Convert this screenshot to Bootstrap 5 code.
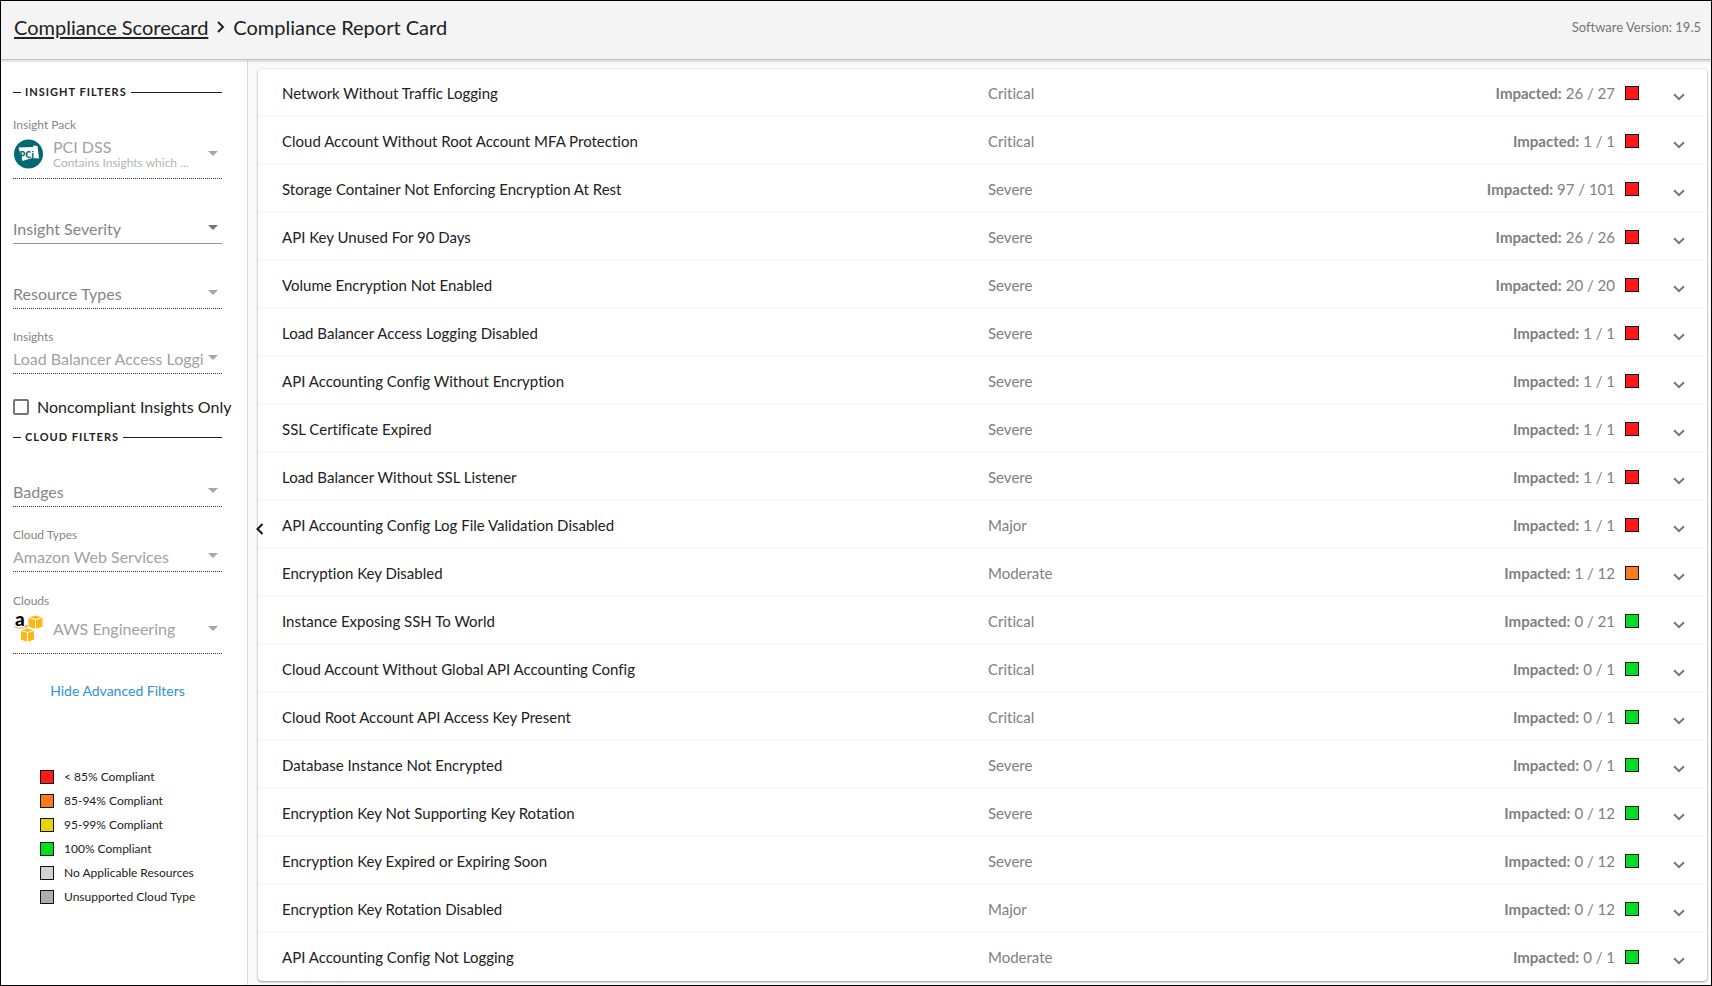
<!DOCTYPE html>
<html lang="en">
<head>
<meta charset="utf-8">
<meta name="viewport" content="width=device-width, initial-scale=1">
<title>Compliance Report Card</title>
<link href="https://cdn.jsdelivr.net/npm/bootstrap@5.3.0/dist/css/bootstrap.min.css" rel="stylesheet">
<style>
  body { font-family: Lato, "Liberation Sans", sans-serif; font-size: 16px; line-height: 24px; color: #212121; background: #fafafa; border: 1px solid #000; }
  body, button, select { font-variant-ligatures: none; }
  .topbar { height: 59px; padding: 0 10px 6px 13px; background: #f4f4f4; border-bottom: 1px solid #c4c4c4; box-shadow: 0 1px 3px rgba(0,0,0,.2); z-index: 2; }
  .crumbs { font-size: 20px; line-height: 28px; gap: 8px; }
  .crumbs a { color: inherit; text-decoration: underline; text-underline-offset: 2px; text-decoration-thickness: 2px; }
  .version { font-size: 13px; color: #757575; }
  .filters { width: 247px; padding: 20px 25px 0 12px; background: #fff; border-right: 1px solid #dcdcdc; }
  .section-title { font-size: 11px; line-height: 24px; font-weight: 700; letter-spacing: 1px; gap: 4px; }
  .section-title::before, .section-title::after { content: ""; height: 1px; background: #212121; width: 8px; }
  .section-title::after { flex: 1; }
  .field { display: flex; flex-direction: column; justify-content: flex-end; height: 65px; border-bottom: 1px dotted #333; padding-bottom: 2px; position: relative; }
  .section-title + .field { height: 58px; }
  .field.live { border-bottom: 1px solid #949494; }
  .field.pic { height: 82px; padding-bottom: 9px; }
  .section-title + .field.pic { height: 75px; padding-bottom: 8px; }
  .caption { font-size: 12px; line-height: 16px; color: #858585; margin-bottom: 2px; }
  .pic .caption { margin-bottom: 5px; }
  .picker { appearance: none; border: 0; padding: 0 18px 0 0; width: 100%; height: 24px; background: none; color: #858585; opacity: 1; line-height: 24px; }
  .chosen { color: #a2a2a2; }
  .picker:disabled { opacity: 1; }
  .pack { line-height: 18px; height: 18px; }
  .sub { font-size: 12px; line-height: 14px; color: #b4b4b4; }
  .beside { min-width: 0; padding-left: 10px; }
  .caret { width: 10px; height: 5px; fill: #a6a6a6; position: absolute; right: 4px; bottom: 13px; pointer-events: none; }
  .live .caret { fill: #757575; }
  .pic .caret { bottom: 22px; }
  .logo { width: 30px; height: 30px; flex: none; overflow: visible; }
  .only { margin: 21px 0 6px; gap: 8px; }
  .tick { appearance: none; width: 16px; height: 16px; border: 2px solid #757575; border-radius: 2px; background: #fff; flex: none; margin: 0; }
  .tick:checked { background: #757575; }
  .advanced { font-size: 14px; color: #2e93d9; border: 0; background: none; padding: 0; margin-top: 25px; }
  .legend { padding: 62px 0 16px 27px; font-size: 12px; }
  .legend li { display: flex; align-items: center; gap: 10px; }
  .swatch { width: 14px; height: 14px; border: 1px solid #111; flex: none; }
  .red { background: #ff1a1a; } .orange { background: #fa7a18; } .yellow { background: #ebd300; }
  .green { background: #00e01a; } .none { background: #d2d2d2; } .unsupported { background: #adadad; }
  .report { padding: 9px 4px 4px 10px; position: relative; }
  .collapser { position: absolute; left: 4px; top: 50%; width: 16px; height: 12px; border: 0; background: none; padding: 0; display: flex; align-items: center; justify-content: center; }
  .panels { background: #fff; border-radius: 4px; box-shadow: 0 1px 2px rgba(0,0,0,.35), 0 0 3px rgba(0,0,0,.12); }
  .panels li + li { box-shadow: 0 -1px 2px rgba(0,0,0,.05); }
  .panel-head { height: 48px; padding: 0 13px 0 24px; border: 0; background: none; color: #212121; text-align: left; font-size: 15px; }
  .half { flex: 1 1 0; min-width: 0; }
  .muted { color: #808080; }
  .count { margin: 0 10px 0 4px; }
  .chev { width: 30px; height: 8px; margin: 8px 0 0 25px; flex: none; }
</style>
</head>
<body class="d-flex flex-column min-vh-100">
<svg class="d-none">
  <symbol id="down" viewBox="0 0 30 8"><path d="M10 1.200 15 6.200l5-5" fill="none" stroke="#757575" stroke-width="2"/></symbol>
  <symbol id="caret" viewBox="0 0 10 5"><path d="M0 0h10L5 5z"/></symbol>
</svg>

<header class="topbar d-flex align-items-center justify-content-between position-relative">
  <nav class="crumbs d-flex align-items-center" aria-label="Breadcrumb">
    <a href="#">Compliance Scorecard</a>
    <svg width="9" height="12" viewBox="0 0 9 12"><path d="M2 1l5 5-5 5" fill="none" stroke="#212121" stroke-width="2"/></svg>
    <span>Compliance Report Card</span>
  </nav>
  <span class="version">Software Version: 19.5</span>
</header>

<div class="d-flex flex-grow-1">
  <aside class="filters flex-shrink-0">
    <div class="section-title d-flex align-items-center">INSIGHT FILTERS</div>

    <div class="field pic">
      <label class="caption" for="pack">Insight Pack</label>
      <div class="d-flex align-items-center">
        <svg class="logo" viewBox="0 0 30 30"><circle cx="15.500" cy="15" r="14.500" fill="#006a70"/><path d="M5.500 8.500l14.500-.5.500-1.500 4 .5 1.500 12.500-7-.5-9.500 3z" fill="#fff"/><text x="6.500" y="18.500" font-size="8" font-weight="700" font-family="DejaVu Sans, sans-serif" fill="#006a70">PCi</text></svg>
        <div class="flex-grow-1 beside">
          <select id="pack" class="picker pack chosen d-block" disabled><option>PCI DSS</option></select>
          <div class="sub">Contains Insights which ...</div>
        </div>
      </div>
      <svg class="caret"><use href="#caret"/></svg>
    </div>

    <div class="field live">
      <select class="picker" aria-label="Insight Severity"><option>Insight Severity</option></select>
      <svg class="caret"><use href="#caret"/></svg>
    </div>
    <div class="field">
      <select class="picker" aria-label="Resource Types" disabled><option>Resource Types</option></select>
      <svg class="caret"><use href="#caret"/></svg>
    </div>
    <div class="field">
      <label class="caption" for="insights">Insights</label>
      <select id="insights" class="picker chosen" disabled><option>Load Balancer Access Logging Disabled</option></select>
      <svg class="caret"><use href="#caret"/></svg>
    </div>

    <div class="only d-flex align-items-center text-nowrap">
      <input class="tick" type="checkbox" id="only"><label for="only">Noncompliant Insights Only</label>
    </div>
    <div class="section-title d-flex align-items-center">CLOUD FILTERS</div>

    <div class="field">
      <select class="picker" aria-label="Badges" disabled><option>Badges</option></select>
      <svg class="caret"><use href="#caret"/></svg>
    </div>
    <div class="field">
      <label class="caption" for="types">Cloud Types</label>
      <select id="types" class="picker chosen" disabled><option>Amazon Web Services</option></select>
      <svg class="caret"><use href="#caret"/></svg>
    </div>
    <div class="field pic">
      <label class="caption" for="clouds">Clouds</label>
      <div class="d-flex align-items-center">
        <svg class="logo" viewBox="0 0 30 30"><text x="2" y="12" font-size="19" font-weight="900" font-family="Lato, sans-serif" fill="#000">a</text><path d="M1 12.500q7 3.500 13 0M11.500 12l3-.5-1 3" fill="none" stroke="#f9a055"/><path d="M15.500 3.500l7-2 7 2v9l-7 2.500-7-2.500z" fill="#fdb813"/><path d="M15.500 3.500l7 2 7-2M22.500 5.500v10" fill="none" stroke="#fff"/><path d="M8 16.500l6.500-2 6.500 2v9L14.500 28 8 25.500z" fill="#fdb813"/><path d="M8 16.500l6.500 2 6.500-2M14.500 18.500v10" fill="none" stroke="#fff"/></svg>
        <div class="flex-grow-1 beside">
          <select id="clouds" class="picker chosen d-block" disabled><option>AWS Engineering</option></select>
        </div>
      </div>
      <svg class="caret"><use href="#caret"/></svg>
    </div>

    <div class="text-center"><button class="advanced" type="button">Hide Advanced Filters</button></div>

    <ul class="legend list-unstyled mb-0">
      <li><span class="swatch red"></span>&lt; 85% Compliant</li>
      <li><span class="swatch orange"></span>85-94% Compliant</li>
      <li><span class="swatch yellow"></span>95-99% Compliant</li>
      <li><span class="swatch green"></span>100% Compliant</li>
      <li><span class="swatch none"></span>No Applicable Resources</li>
      <li><span class="swatch unsupported"></span>Unsupported Cloud Type</li>
    </ul>
  </aside>

  <main class="report flex-grow-1">
    <ul class="panels list-unstyled mb-0">
      <li><button type="button" class="panel-head d-flex align-items-center w-100"><span class="half">Network Without Traffic Logging</span><span class="half muted d-flex align-items-center"><span class="me-auto">Critical</span><b>Impacted:</b><span class="count">26 / 27</span><i class="swatch red"></i><svg class="chev"><use href="#down"/></svg></span></button></li>
      <li><button type="button" class="panel-head d-flex align-items-center w-100"><span class="half">Cloud Account Without Root Account MFA Protection</span><span class="half muted d-flex align-items-center"><span class="me-auto">Critical</span><b>Impacted:</b><span class="count">1 / 1</span><i class="swatch red"></i><svg class="chev"><use href="#down"/></svg></span></button></li>
      <li><button type="button" class="panel-head d-flex align-items-center w-100"><span class="half">Storage Container Not Enforcing Encryption At Rest</span><span class="half muted d-flex align-items-center"><span class="me-auto">Severe</span><b>Impacted:</b><span class="count">97 / 101</span><i class="swatch red"></i><svg class="chev"><use href="#down"/></svg></span></button></li>
      <li><button type="button" class="panel-head d-flex align-items-center w-100"><span class="half">API Key Unused For 90 Days</span><span class="half muted d-flex align-items-center"><span class="me-auto">Severe</span><b>Impacted:</b><span class="count">26 / 26</span><i class="swatch red"></i><svg class="chev"><use href="#down"/></svg></span></button></li>
      <li><button type="button" class="panel-head d-flex align-items-center w-100"><span class="half">Volume Encryption Not Enabled</span><span class="half muted d-flex align-items-center"><span class="me-auto">Severe</span><b>Impacted:</b><span class="count">20 / 20</span><i class="swatch red"></i><svg class="chev"><use href="#down"/></svg></span></button></li>
      <li><button type="button" class="panel-head d-flex align-items-center w-100"><span class="half">Load Balancer Access Logging Disabled</span><span class="half muted d-flex align-items-center"><span class="me-auto">Severe</span><b>Impacted:</b><span class="count">1 / 1</span><i class="swatch red"></i><svg class="chev"><use href="#down"/></svg></span></button></li>
      <li><button type="button" class="panel-head d-flex align-items-center w-100"><span class="half">API Accounting Config Without Encryption</span><span class="half muted d-flex align-items-center"><span class="me-auto">Severe</span><b>Impacted:</b><span class="count">1 / 1</span><i class="swatch red"></i><svg class="chev"><use href="#down"/></svg></span></button></li>
      <li><button type="button" class="panel-head d-flex align-items-center w-100"><span class="half">SSL Certificate Expired</span><span class="half muted d-flex align-items-center"><span class="me-auto">Severe</span><b>Impacted:</b><span class="count">1 / 1</span><i class="swatch red"></i><svg class="chev"><use href="#down"/></svg></span></button></li>
      <li><button type="button" class="panel-head d-flex align-items-center w-100"><span class="half">Load Balancer Without SSL Listener</span><span class="half muted d-flex align-items-center"><span class="me-auto">Severe</span><b>Impacted:</b><span class="count">1 / 1</span><i class="swatch red"></i><svg class="chev"><use href="#down"/></svg></span></button></li>
      <li><button type="button" class="panel-head d-flex align-items-center w-100"><span class="half">API Accounting Config Log File Validation Disabled</span><span class="half muted d-flex align-items-center"><span class="me-auto">Major</span><b>Impacted:</b><span class="count">1 / 1</span><i class="swatch red"></i><svg class="chev"><use href="#down"/></svg></span></button></li>
      <li><button type="button" class="panel-head d-flex align-items-center w-100"><span class="half">Encryption Key Disabled</span><span class="half muted d-flex align-items-center"><span class="me-auto">Moderate</span><b>Impacted:</b><span class="count">1 / 12</span><i class="swatch orange"></i><svg class="chev"><use href="#down"/></svg></span></button></li>
      <li><button type="button" class="panel-head d-flex align-items-center w-100"><span class="half">Instance Exposing SSH To World</span><span class="half muted d-flex align-items-center"><span class="me-auto">Critical</span><b>Impacted:</b><span class="count">0 / 21</span><i class="swatch green"></i><svg class="chev"><use href="#down"/></svg></span></button></li>
      <li><button type="button" class="panel-head d-flex align-items-center w-100"><span class="half">Cloud Account Without Global API Accounting Config</span><span class="half muted d-flex align-items-center"><span class="me-auto">Critical</span><b>Impacted:</b><span class="count">0 / 1</span><i class="swatch green"></i><svg class="chev"><use href="#down"/></svg></span></button></li>
      <li><button type="button" class="panel-head d-flex align-items-center w-100"><span class="half">Cloud Root Account API Access Key Present</span><span class="half muted d-flex align-items-center"><span class="me-auto">Critical</span><b>Impacted:</b><span class="count">0 / 1</span><i class="swatch green"></i><svg class="chev"><use href="#down"/></svg></span></button></li>
      <li><button type="button" class="panel-head d-flex align-items-center w-100"><span class="half">Database Instance Not Encrypted</span><span class="half muted d-flex align-items-center"><span class="me-auto">Severe</span><b>Impacted:</b><span class="count">0 / 1</span><i class="swatch green"></i><svg class="chev"><use href="#down"/></svg></span></button></li>
      <li><button type="button" class="panel-head d-flex align-items-center w-100"><span class="half">Encryption Key Not Supporting Key Rotation</span><span class="half muted d-flex align-items-center"><span class="me-auto">Severe</span><b>Impacted:</b><span class="count">0 / 12</span><i class="swatch green"></i><svg class="chev"><use href="#down"/></svg></span></button></li>
      <li><button type="button" class="panel-head d-flex align-items-center w-100"><span class="half">Encryption Key Expired or Expiring Soon</span><span class="half muted d-flex align-items-center"><span class="me-auto">Severe</span><b>Impacted:</b><span class="count">0 / 12</span><i class="swatch green"></i><svg class="chev"><use href="#down"/></svg></span></button></li>
      <li><button type="button" class="panel-head d-flex align-items-center w-100"><span class="half">Encryption Key Rotation Disabled</span><span class="half muted d-flex align-items-center"><span class="me-auto">Major</span><b>Impacted:</b><span class="count">0 / 12</span><i class="swatch green"></i><svg class="chev"><use href="#down"/></svg></span></button></li>
      <li><button type="button" class="panel-head d-flex align-items-center w-100"><span class="half">API Accounting Config Not Logging</span><span class="half muted d-flex align-items-center"><span class="me-auto">Moderate</span><b>Impacted:</b><span class="count">0 / 1</span><i class="swatch green"></i><svg class="chev"><use href="#down"/></svg></span></button></li>
    </ul>
    <button class="collapser" type="button" aria-label="Collapse filters"><svg width="8" height="12" viewBox="0 0 8 12"><path d="M6.500 1l-5 5 5 5" fill="none" stroke="#111" stroke-width="2"/></svg></button>
  </main>
</div>
<script src="https://cdn.jsdelivr.net/npm/bootstrap@5.3.0/dist/js/bootstrap.bundle.min.js"></script>
</body>
</html>
